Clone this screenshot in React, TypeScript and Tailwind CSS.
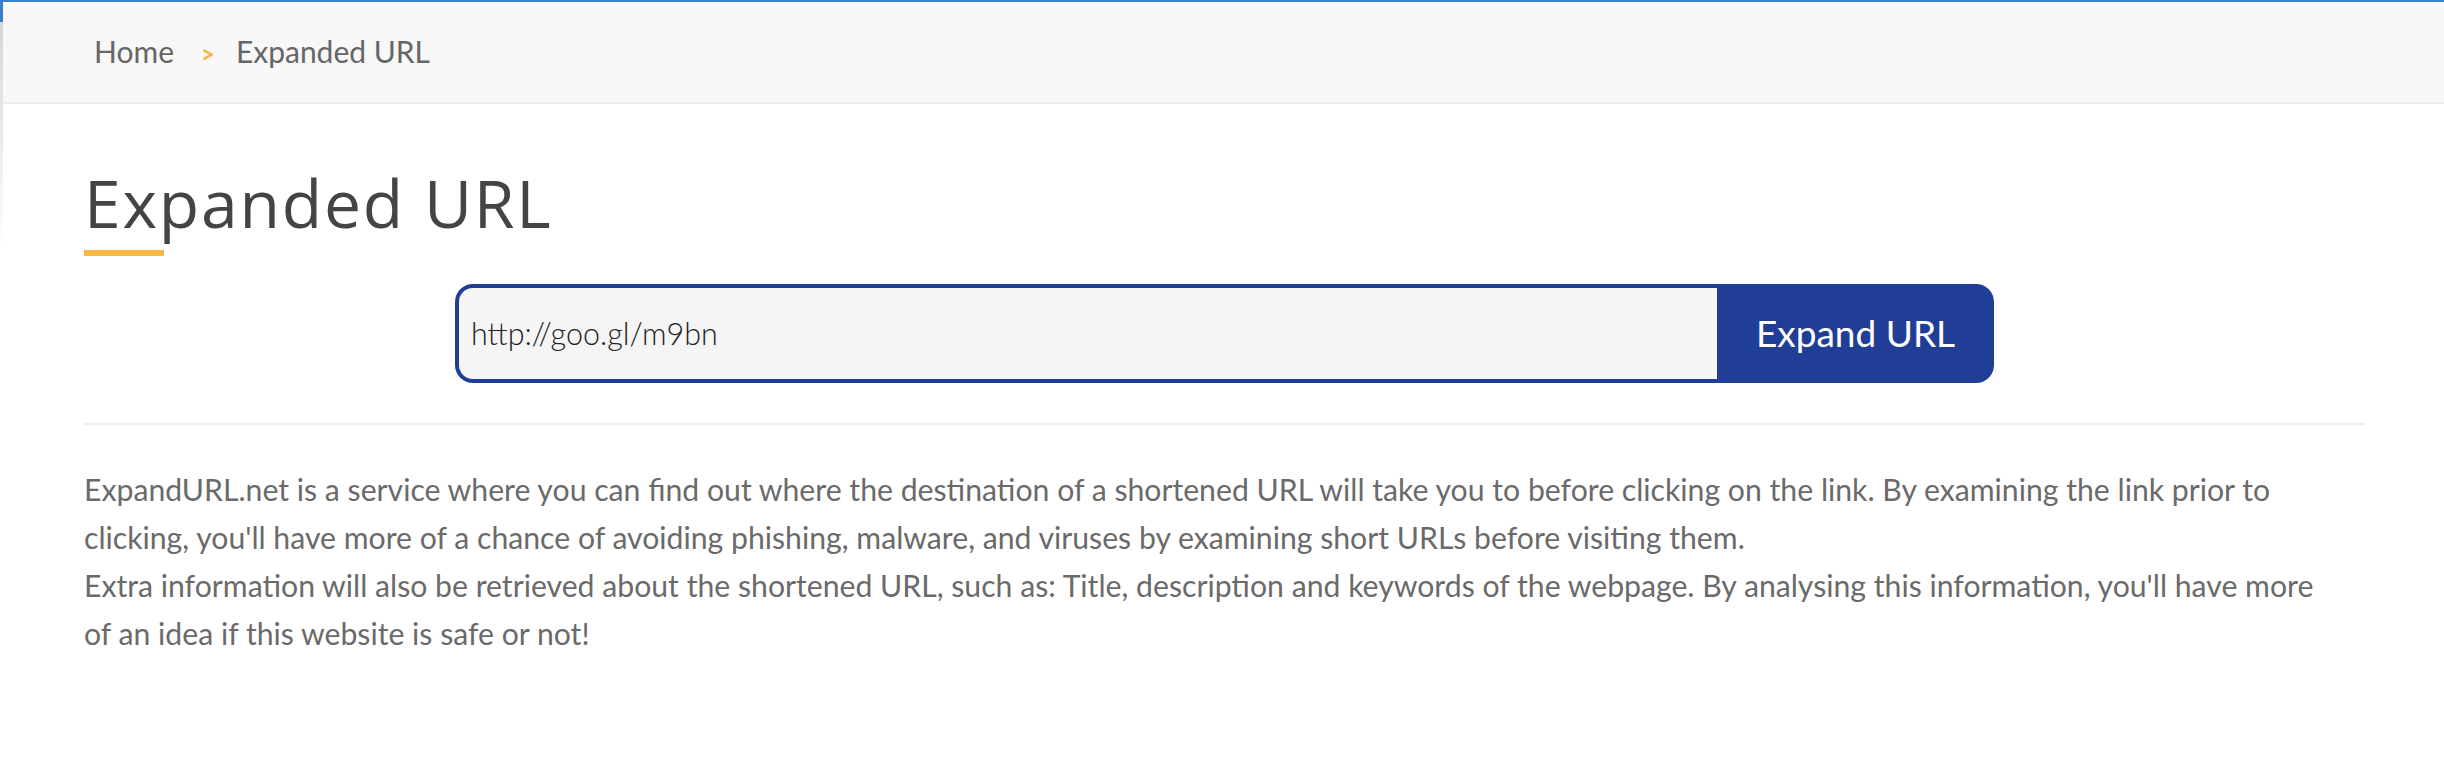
import React from "react";

export default function App() {
  return (
    <div className="w-[2444px] h-[774px] bg-white flex flex-col overflow-hidden">
      <div className="h-[2px] bg-[#3a80c8]" />
      <div className="flex flex-1">
        <div className="w-[3px] flex flex-col">
          <div className="h-[20px] bg-[#3a80c8]" />
          <div className="h-[230px] bg-linear-to-b from-[#d6d6d6] to-white" />
        </div>
        <div className="flex-1 flex flex-col">
          <div className="h-[102px] bg-[#f8f8f8] border-b-2 border-[#eeeeee] flex items-center pl-[91px] pb-[2px]">
            <div
              className="flex items-baseline text-[#666666] text-[30px]"
              style={{ fontFamily: "Lato, 'Open Sans', sans-serif" }}
            >
              <span>Home</span>
              <span className="text-[#f5b53f] text-[24px] font-bold ml-[27px] mr-[21px]">&gt;</span>
              <span>Expanded URL</span>
            </div>
          </div>

          <div className="pl-[81px] pr-[79px]">
            <h1
              className="mt-[65px] text-[66px] leading-none font-normal text-[#444444] tracking-[1.8px]"
              style={{ fontFamily: "'Open Sans', Lato, sans-serif" }}
            >
              Expanded URL
            </h1>
            <div className="mt-[15px] w-[80px] h-[6px] bg-[#f6b843]" />

            <form className="mt-[28px] mx-auto w-[1539px] h-[99px] flex" onSubmit={(e) => e.preventDefault()}>
              <div className="flex-1 flex items-center border-4 border-r-0 border-[#203e95] rounded-l-[18px] bg-[#f5f5f5] pl-[12px]">
                <span
                  className="text-[30.5px] font-light text-[#222222]"
                  style={{ fontFamily: "Lato, 'Open Sans', sans-serif" }}
                >
                  http://goo.gl/m9bn
                </span>
              </div>
              <button
                type="submit"
                className="w-[277px] h-full bg-[#203e95] rounded-r-[18px] text-white text-[37px] flex items-center justify-center pb-[2px]"
                style={{ fontFamily: "Lato, 'Open Sans', sans-serif" }}
              >
                Expand URL
              </button>
            </form>

            <div className="mt-[40px] h-[2px] bg-[#eeeeee]" />

            <div
              className="mt-[40px] mr-[22px] text-[30.2px] leading-[48px] text-[#6a6a6a]"
              style={{ fontFamily: "Lato, 'Open Sans', sans-serif" }}
            >
              ExpandURL.net is a service where you can find out where the destination of a shortened URL will take you to before clicking on the link. By examining the link prior to clicking, you'll have more of a chance of avoiding phishing, malware, and viruses by examining short URLs before visiting them.
              <br />
              Extra information will also be retrieved about the shortened URL, such as: Title, description and keywords of the webpage. By analysing this information, you'll have more of an idea if this website is safe or not!
            </div>
          </div>
        </div>
      </div>
    </div>
  );
}
